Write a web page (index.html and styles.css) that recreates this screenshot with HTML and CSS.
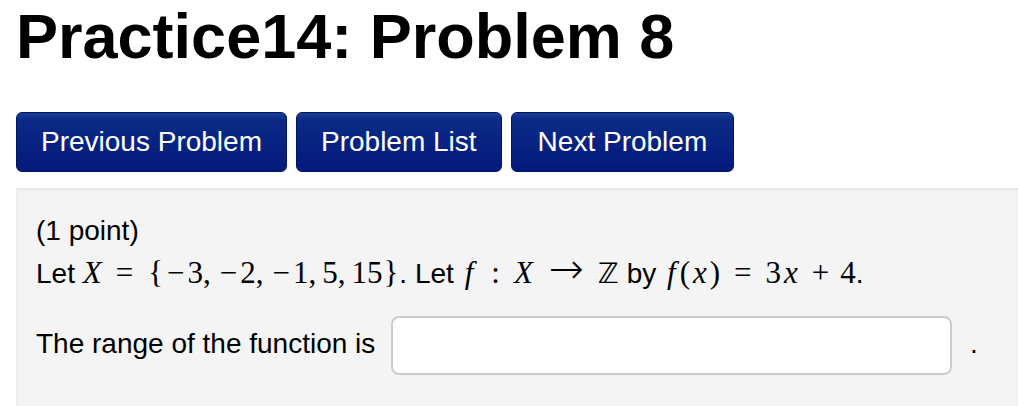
FILE: index.html
```html
<!DOCTYPE html>
<html lang="en">

<head>
    <meta charset="UTF-8">
    <meta name="viewport" content="width=device-width, initial-scale=1.0">
    <title>Practice14: Problem 8</title>
    <link rel="stylesheet" href="styles.css">
</head>

<body>
    <h1 class="page-title">Practice14: Problem 8</h1>

    <div class="nav-buttons">
        <a href="#" class="nav-btn">Previous Problem</a>
        <a href="#" class="nav-btn">Problem List</a>
        <a href="#" class="nav-btn">Next Problem</a>
    </div>

    <div class="problem">
        <p class="statement">
            (1 point)<br>
            Let <span class="math"><i>X</i><span class="rel">=</span><span class="brace">{</span><span class="mo">−</span>3,<span class="sp"></span><span class="mo">−</span>2,<span class="sp"></span><span class="mo">−</span>1,<span class="sp"></span>5,<span class="sp"></span>15<span class="brace">}</span></span>. Let <span class="math"><i class="fn">f</i><span class="rel">:</span><i class="cap">X</i><span class="arrow">→</span><span class="bb">ℤ</span></span> by <span class="math"><i class="fn">f</i>(<i class="var">x</i>)<span class="rel">=</span>3<i class="var">x</i><span class="bin">+</span>4</span>.
        </p>

        <p class="answer-row">
            The range of the function is <input type="text" class="answer-box"> <span class="dot">.</span>
        </p>
    </div>
</body>

</html>
```

FILE: styles.css
```css
html,
body {
    height: 100%;
}

body {
    margin: 0;
    padding: 0 0 0 16px;
    box-sizing: border-box;
    display: flex;
    flex-direction: column;
    font-family: "Liberation Sans", Arial, sans-serif;
    background-color: #ffffff;
    color: #000000;
    overflow: hidden;
}

.page-title {
    margin: 0;
    font-size: 63px;
    line-height: 72px;
    font-weight: bold;
}

.nav-buttons {
    display: flex;
    gap: 9px;
    margin-top: 40px;
}

.nav-btn {
    display: flex;
    align-items: center;
    height: 58px;
    padding: 0 24px;
    font-size: 28px;
    color: #ffffff;
    text-decoration: none;
    border: 1px solid #001466;
    border-radius: 6px;
    background: linear-gradient(to bottom, #1a3d93 0%, #0b2b87 12%, #03197c 100%);
}

.nav-btn:last-child {
    padding: 0 26px;
}

.problem {
    flex: 1;
    margin-top: 16px;
    padding: 24px 19px 20px;
    background-color: #f4f4f4;
    border-top: 1px solid #e4e4e4;
    border-left: 1px solid #ececec;
    box-shadow: inset 0 2px 3px rgba(0, 0, 0, 0.04);
    font-size: 28px;
    line-height: 35px;
}

.statement {
    margin: 0;
}

.math {
    font-family: "Liberation Serif", "Times New Roman", serif;
    font-size: 31px;
    line-height: 1;
}

.math i {
    font-style: italic;
}

.math .fn {
    margin: 0 4px 0 3px;
}

.math .var {
    margin: 0 3px;
}

.math .cap {
    margin-right: 4px;
}

.rel {
    margin: 0 14px;
}

.arrow {
    font-family: "DejaVu Sans", sans-serif;
    font-weight: 200;
    font-size: 42px;
    margin: 0 14px 0 12px;
}

.bin {
    margin: 0 11px;
}

.brace {
    margin: 0 1px;
}

.mo {
    margin: 0 3px;
}

.sp {
    margin-left: 6px;
}

.bb {
    font-family: "DejaVu Sans", sans-serif;
    font-size: 28px;
}

.answer-row {
    margin: 25px 0 0;
}

.answer-box {
    width: 557px;
    height: 55px;
    margin-left: 8px;
    vertical-align: middle;
    box-sizing: content-box;
    padding: 0;
    border: 2px solid #cccccc;
    border-radius: 8px;
    background-color: #ffffff;
}

.dot {
    margin-left: 10px;
}
```
